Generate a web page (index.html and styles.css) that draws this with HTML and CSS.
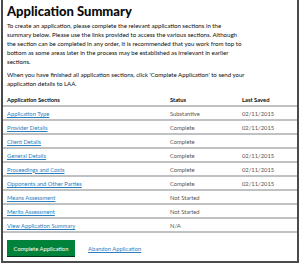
FILE: index.html
```html
<!DOCTYPE html>
<html lang="en">
<head>
    <meta charset="UTF-8">
    <meta name="viewport" content="width=device-width, initial-scale=1.0">
    <title>Application Summary</title>
    <link rel="stylesheet" href="styles.css">
</head>
<body>
<div class="frame">
    <h1 class="page-title">Application Summary</h1>
    <p class="intro">To create an application, please complete the relevant application sections in the summary below. Please use the links provided to access the various sections. Although the section can be completed in any order, it is recommended that you work from top to bottom as some areas later in the process may be established as irrelevant in earlier sections.</p>
    <p class="intro">When you have finished all application sections, click 'Complete Application' to send your application details to LAA.</p>
    <table class="sections">
        <colgroup>
            <col class="col-section">
            <col class="col-status">
            <col>
        </colgroup>
        <thead>
            <tr><th>Application Sections</th><th>Status</th><th>Last Saved</th></tr>
        </thead>
        <tbody>
            <tr><td><a href="#">Application Type</a></td><td>Substantive</td><td>02/11/2015</td></tr>
            <tr><td><a href="#">Provider Details</a></td><td>Complete</td><td>02/11/2015</td></tr>
            <tr><td><a href="#">Client Details</a></td><td>Complete</td><td></td></tr>
            <tr><td><a href="#">General Details</a></td><td>Complete</td><td>02/11/2015</td></tr>
            <tr><td><a href="#">Proceedings and Costs</a></td><td>Complete</td><td>02/11/2015</td></tr>
            <tr><td><a href="#">Opponents and Other Parties</a></td><td>Complete</td><td>02/11/2015</td></tr>
            <tr><td><a href="#">Means Assessment</a></td><td>Not Started</td><td></td></tr>
            <tr><td><a href="#">Merits Assessment</a></td><td>Not Started</td><td></td></tr>
            <tr><td><a href="#">View Application Summary</a></td><td>N/A</td><td></td></tr>
        </tbody>
    </table>
    <div class="actions">
        <button type="button" class="complete-button">Complete Application</button>
        <a href="#" class="abandon-link">Abandon Application</a>
    </div>
</div>
</body>
</html>
```

FILE: styles.css
```css
body {
    margin: 0;
    padding: 0;
    background-color: #fff;
    color: #0b0c0c;
    font-family: Lato, "Liberation Sans", sans-serif;
}
.frame {
    box-sizing: border-box;
    width: 298px;
    height: 263px;
    margin-left: 1px;
    border: 2px solid #4a4a4a;
    border-top: none;
}
.page-title {
    margin: 0;
    padding: 3px 4px 1px;
    font-size: 13px;
    line-height: 17px;
    font-weight: 900;
}
.intro {
    max-width: 240px;
    margin: 0 0 4px;
    padding: 0 4px;
    font-size: 6.1px;
    line-height: 9px;
}
.sections {
    width: 100%;
    margin-top: 5px;
    border-collapse: collapse;
    table-layout: fixed;
    font-size: 5.8px;
}
.col-section {
    width: 163px;
}
.col-status {
    width: 72px;
}
.sections th,
.sections td {
    height: 12px;
    padding: 0 4px;
    text-align: left;
    border-bottom: 2px solid #bfc1c3;
    white-space: nowrap;
}
.sections th {
    font-weight: 700;
}
.sections td {
    color: #555;
}
.sections a {
    color: #2b7fc1;
}
.actions {
    display: flex;
    align-items: center;
    gap: 13px;
    padding: 7px 4px 0;
}
.complete-button {
    width: 68px;
    height: 16px;
    padding: 0;
    border: none;
    background-color: #00823b;
    box-shadow: 0 1px 0 #003618;
    color: #fff;
    font-family: Lato, "Liberation Sans", sans-serif;
    font-size: 5.8px;
}
.abandon-link {
    color: #2b7fc1;
    font-size: 5.8px;
}
```
